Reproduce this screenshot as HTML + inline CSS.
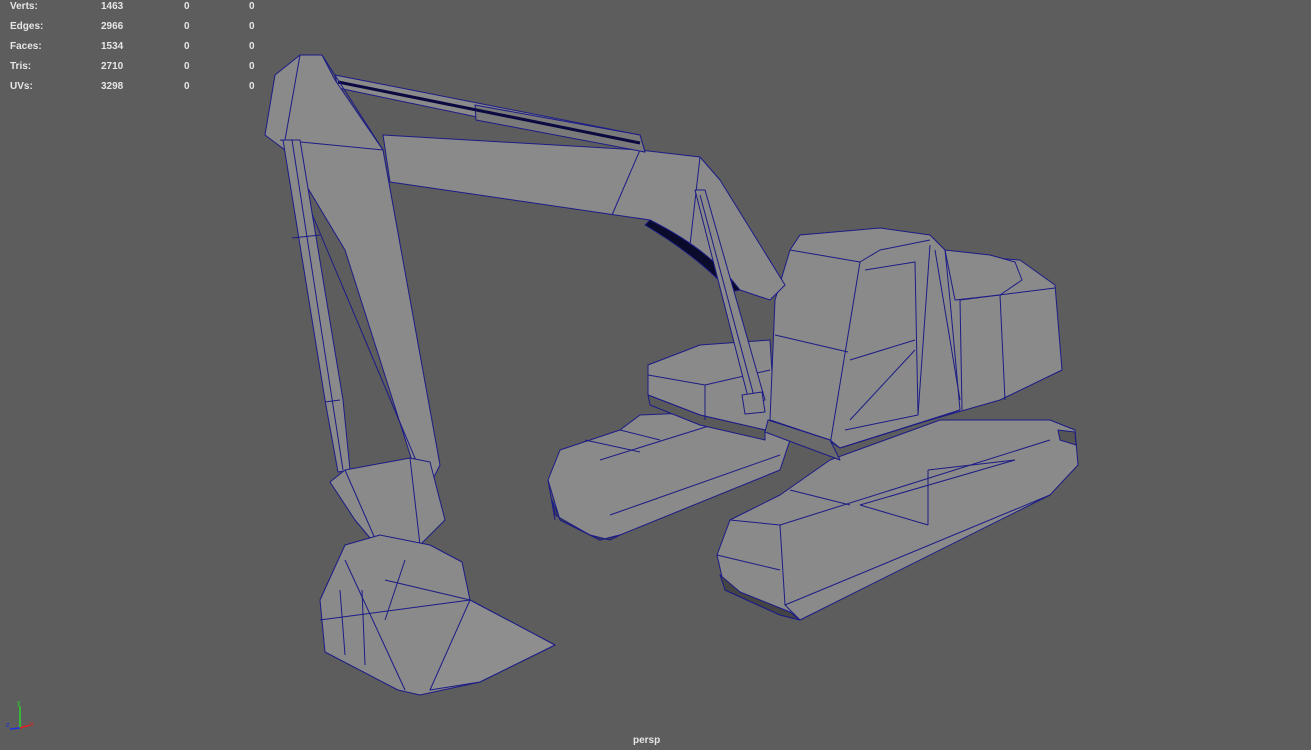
<!DOCTYPE html>
<html><head><meta charset="utf-8"><style>
html,body{margin:0;padding:0;background:#5d5d5d;width:1311px;height:750px;overflow:hidden}
.hud{position:absolute;font:bold 10px "Liberation Sans",sans-serif;color:#e6e6e6}
svg{position:absolute;left:0;top:0}
</style></head><body>
<svg width="1311" height="750" viewBox="0 0 1311 750">
<g fill="#8a8a8a" stroke="#1c1c86" stroke-width="1" stroke-linejoin="round">
<polygon points="548,480 560,450 620,430 640,415 760,410 790,440 780,470 620,535 600,540 560,520" />
<polygon points="552,500 560,520 600,540 620,535 610,540 590,535 555,515" fill="#444"/>
<polyline fill="none" points="548,480 555,520 M560,450 600,460 610,515 600,540"/>
<line x1="600" y1="460" x2="760" y2="410"/><line x1="610" y1="515" x2="780" y2="455"/>
<line x1="585" y1="440" x2="640" y2="452"/><line x1="620" y1="430" x2="660" y2="440"/>
<polygon points="648,365 700,345 770,340 775,420 765,430 700,415 648,395" />
<polygon points="648,395 700,415 765,430 765,440 700,425 650,405" fill="#5a5a5a"/>
<line x1="648" y1="375" x2="705" y2="385"/><line x1="705" y1="385" x2="770" y2="370"/><line x1="705" y1="385" x2="705" y2="420"/>
<polygon points="717,555 730,520 780,495 830,460 940,420 1050,420 1075,430 1078,465 1050,495 800,620 780,615 725,590" />
<polygon points="720,575 725,590 780,615 800,620 790,612 740,592" fill="#444"/>
<polyline fill="none" points="730,520 780,525 785,605 800,620"/>
<line x1="780" y1="525" x2="1050" y2="440"/><line x1="785" y1="605" x2="1050" y2="495"/>
<line x1="717" y1="555" x2="780" y2="570"/><line x1="790" y1="490" x2="850" y2="505"/>
<line x1="860" y1="505" x2="928" y2="525"/><line x1="928" y1="470" x2="928" y2="525"/>
<line x1="860" y1="505" x2="1015" y2="460"/><line x1="928" y1="470" x2="1015" y2="460"/>
<polygon points="1058,430 1075,432 1076,445 1060,440" fill="#555"/>
<polygon points="950,255 1020,260 1055,285 1062,370 1000,400 930,420 915,300" />
<polygon points="945,250 990,255 1015,262 1022,280 1000,295 955,300" />
<line x1="960" y1="300" x2="1055" y2="288"/><line x1="1000" y1="295" x2="1005" y2="400"/><line x1="960" y1="300" x2="962" y2="410"/>
<polygon points="790,250 800,235 880,228 930,235 945,250 950,300 960,410 930,420 840,448 828,440 770,420 775,300"/>
<polyline fill="none" points="790,250 860,262 880,250 930,240"/>
<line x1="860" y1="262" x2="830" y2="445"/><line x1="775" y1="335" x2="848" y2="352"/>
<polyline fill="none" points="770,420 830,440 840,448 960,410"/>
<polygon points="768,420 830,440 840,460 765,432" fill="#6a6a6a"/>
<polyline fill="none" points="865,270 915,262 918,415 845,430"/>
<line x1="850" y1="360" x2="915" y2="340"/><line x1="850" y1="420" x2="915" y2="350"/>
<line x1="930" y1="245" x2="918" y2="415"/><line x1="935" y1="250" x2="960" y2="400"/>
<polygon points="383,135 640,150 700,157 720,180 785,285 770,300 740,290 690,245 650,220 390,182"/>
<path d="M650,220 Q710,250 740,290 L730,292 Q700,258 645,225Z" fill="#0a0a2a"/>
<line x1="640" y1="150" x2="612" y2="215"/><line x1="700" y1="157" x2="690" y2="245"/>
<polygon points="695,190 705,190 765,400 750,405" />
<line x1="700" y1="195" x2="755" y2="400"/>
<polygon points="742,395 762,392 765,412 745,414"/>
<polygon points="335,75 640,135 645,152 338,88"/>
<polygon points="475,105 640,135 645,152 476,120" fill="#7a7a7a"/>
<line x1="338" y1="82" x2="640" y2="143" stroke="#0a0a40" stroke-width="3"/>
<polygon points="265,135 275,75 300,55 322,55 335,80 383,150 440,465 425,495 415,470 345,250 285,150"/>
<line x1="280" y1="140" x2="383" y2="150"/><line x1="285" y1="150" x2="420" y2="470"/>
<line x1="300" y1="55" x2="285" y2="140"/><line x1="322" y1="55" x2="383" y2="150"/>
<polygon points="283,140 300,140 343,400 350,470 338,472 325,400"/>
<line x1="292" y1="140" x2="343" y2="470"/><line x1="320" y1="235" x2="292" y2="238"/><line x1="340" y1="400" x2="325" y2="402"/>
<polygon points="330,482 345,470 410,458 430,462 445,520 420,545 380,550 355,520"/>
<line x1="345" y1="470" x2="380" y2="550"/><line x1="410" y1="458" x2="420" y2="545"/>
<polygon points="320,600 345,545 380,535 430,545 462,562 470,600 555,645 480,682 420,695 398,690 325,652"/>
<polygon points="470,600 555,645 480,682 430,690" fill="#8e8e8e"/>
<line x1="345" y1="560" x2="405" y2="690"/><line x1="385" y1="580" x2="470" y2="600"/>
<line x1="320" y1="620" x2="470" y2="600"/><line x1="362" y1="590" x2="365" y2="665"/>
<line x1="340" y1="590" x2="345" y2="655"/><line x1="405" y1="560" x2="385" y2="620"/>
</g>
<line x1="20" y1="728" x2="20" y2="706" stroke="#2ad52a" stroke-width="1.5"/>
<line x1="20" y1="728" x2="30" y2="725" stroke="#e02020" stroke-width="1.5"/>
<line x1="20" y1="728" x2="10" y2="729" stroke="#2030e0" stroke-width="1.5"/>
<text x="17" y="705" fill="#2ad52a" font-size="7" font-family="Liberation Sans">y</text>
<text x="30" y="726" fill="#e02020" font-size="7" font-family="Liberation Sans">x</text>
<text x="6" y="727" fill="#2030e0" font-size="7" font-family="Liberation Sans">z</text>
</svg>
<div class="hud" style="left:10px;top:-3px;line-height:20px">Verts:<br>Edges:<br>Faces:<br>Tris:<br>UVs:</div>
<div class="hud" style="left:101px;top:-3px;line-height:20px">1463<br>2966<br>1534<br>2710<br>3298</div>
<div class="hud" style="left:184px;top:-3px;line-height:20px">0<br>0<br>0<br>0<br>0</div>
<div class="hud" style="left:249px;top:-3px;line-height:20px">0<br>0<br>0<br>0<br>0</div>
<div class="hud" style="left:633px;top:735px">persp</div>
</body></html>
